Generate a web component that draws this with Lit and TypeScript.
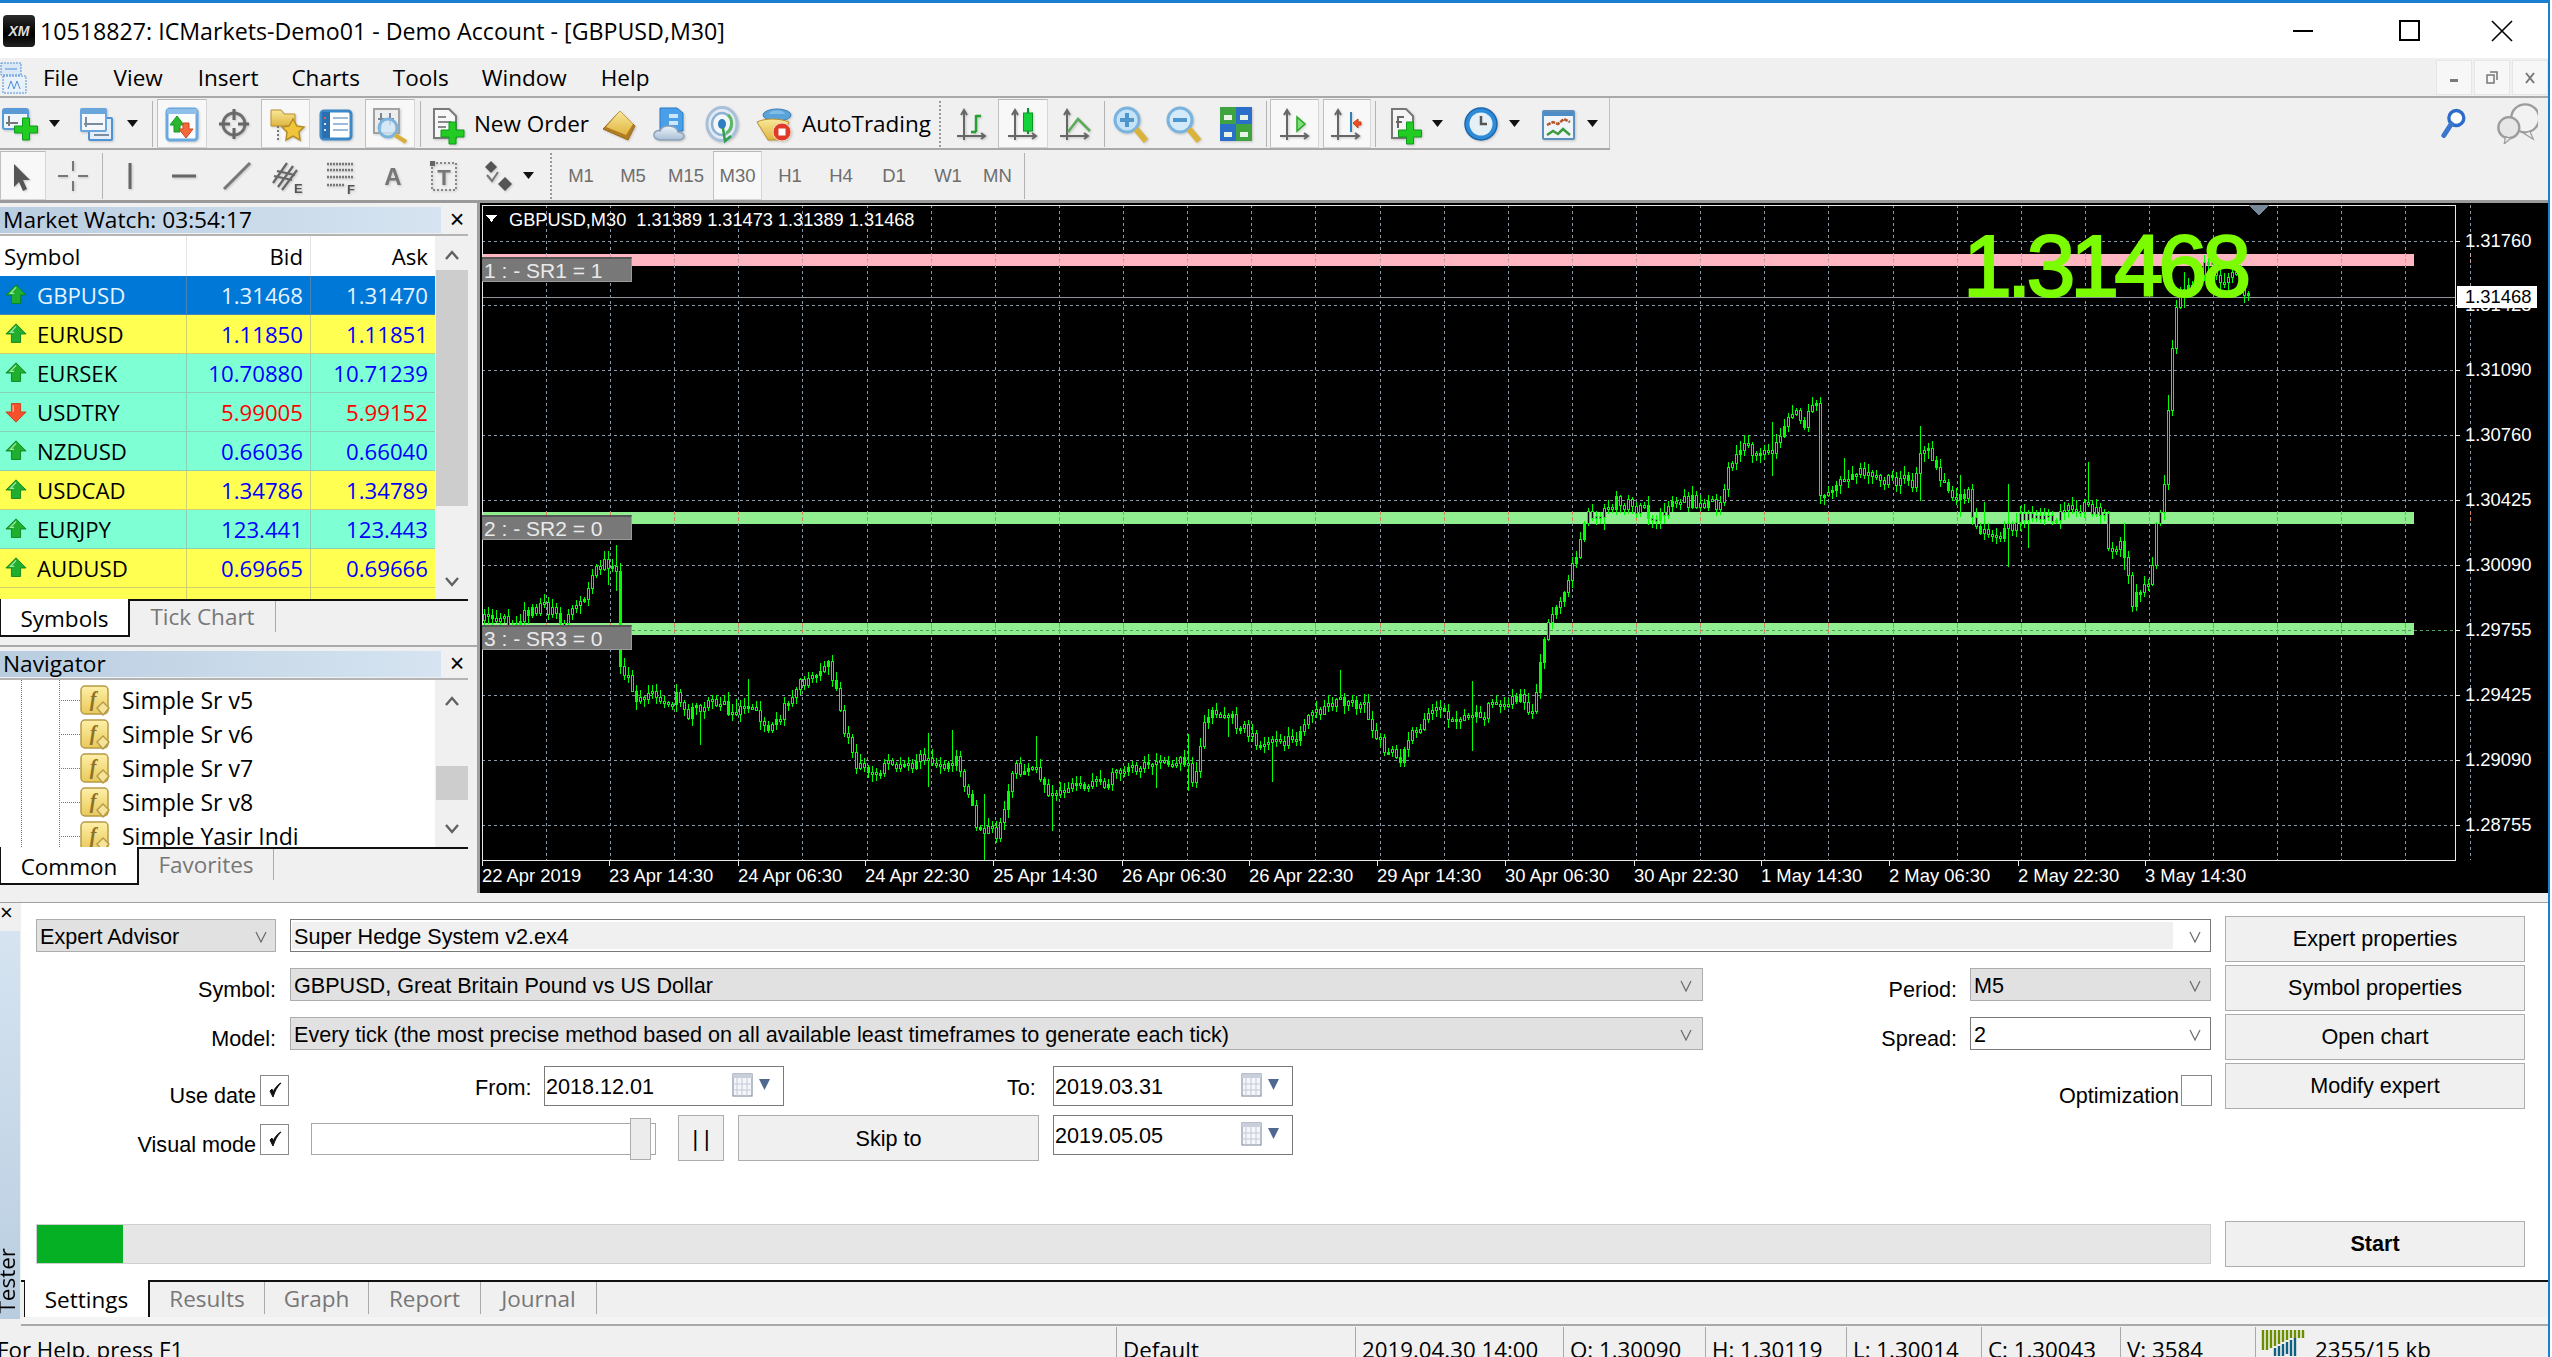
import { LitElement, html, css, svg } from "lit";
import { customElement } from "lit/decorators.js";

const ax = (x: number, y: number, w = 21) => svg`<path d="M${x} 5V${y + 4}M${x - 3} 9l3-5 3 5M${x - 7} ${y}H${x + w}M${x + w - 4} ${y - 3}l4 3-4 3" fill="none" stroke="#666" stroke-width="2"/>`;
const plus = (x = 0, y = 0) => svg`<path transform="translate(${x} ${y})" d="M20 14h7v8h8v7h-8v7h-7v-7h-8v-7h8z" fill="#22cc22" stroke="#0c9a1c"/>`;
const winBg = svg`<defs><linearGradient id="gold" x1="0" y1="0" x2="0" y2="1"><stop offset="0" stop-color="#f8e899"/><stop offset="1" stop-color="#e0b540"/></linearGradient><linearGradient id="cld" x1="0" y1="0" x2="0" y2="1"><stop offset="0" stop-color="#eef3f8"/><stop offset="1" stop-color="#a8bed6"/></linearGradient></defs>`;

const icons: Record<string, any> = {
  newChart: svg`<rect x="3" y="3" width="25" height="20" rx="2" fill="#eef5fc" stroke="#5b9bd5" stroke-width="2"/><rect x="4" y="4" width="23" height="4" fill="#5b9bd5"/><path d="M9 20V10M6 17h12" stroke="#777" stroke-width="2" fill="none"/>${plus(2.5, -2)}`,
  profile: svg`<rect x="10" y="12" width="23" height="22" rx="1" fill="#e3eefa" stroke="#4f93d2" stroke-width="2"/><rect x="2" y="3" width="25" height="22" rx="1" fill="#f4f8fc" stroke="#6aa5dc" stroke-width="2"/><rect x="3" y="4" width="23" height="4" fill="#6aa5dc"/><path d="M7 21V11M5 18h19M15 29h15" stroke="#7d8c9a" stroke-width="2" fill="none"/>`,
  market: svg`<rect x="3" y="3" width="30" height="31" rx="3" fill="#fbfcfd" stroke="#6aa9e0" stroke-width="3"/><rect x="3" y="3" width="30" height="5" fill="#8fbfe8"/><path d="M6 19l7-9 7 9h-4v7h-6v-7z" fill="#2bb62b" stroke="#129a25"/><path d="M15 23h4v-6h6v6h4l-7 9z" fill="#f2693c" stroke="#d9431a"/>`,
  cross: svg`<circle cx="18" cy="18" r="11" fill="none" stroke="#6e6e6e" stroke-width="3"/><path d="M18 3v11M18 22v11M3 18h11M22 18h11" stroke="#666" stroke-width="3"/>`,
  fav: svg`<path d="M3 4h10l3 4h11v12H3z" fill="url(#gold)" stroke="#b98f2a"/><path d="M10 20v14" stroke="#777" stroke-width="2" stroke-dasharray="2 2"/><path d="M25 13l4 7 7 1-5 5 1 8-7-4-7 4 1-8-5-5 7-1z" fill="#f0c53c" stroke="#b58d26" stroke-width="1.5"/>`,
  term: svg`<rect x="3" y="5" width="30" height="28" rx="3" fill="#fff" stroke="#3d88c8" stroke-width="3"/><rect x="4" y="6" width="8" height="26" fill="#2a6fb0"/><path d="M15 12h15M15 18h15M15 24h15" stroke="#9db9dc" stroke-width="2"/><path d="M7 11v2" stroke="#e65b50" stroke-width="2"/><path d="M7 17v2M7 23v2" stroke="#dfe9f3" stroke-width="2"/>`,
  tester: svg`<rect x="2" y="3" width="25" height="24" fill="#ededed" stroke="#a2a2a2" stroke-width="2"/><path d="M9 7v16M18 7v12M6 13h16" stroke="#7a8594" stroke-width="2"/><circle cx="16" cy="22" r="9" fill="#cfe6f8" fill-opacity=".8" stroke="#7db4de" stroke-width="3"/><path d="M23 29l11 7" stroke="#d9ae37" stroke-width="4"/>`,
  order: svg`<path d="M2 3h15l7 7v22H2z" fill="#f7f7f7" stroke="#7a7a7a" stroke-width="2"/><path d="M6 11h8M6 16h13M6 21h8" stroke="#8a8a8a" stroke-width="2"/>${plus(-3, 2)}`,
  gold: svg`<path d="M19 5L2 23l25 11 7-14z" fill="#b27c22" stroke="#9a6a1a"/><path d="M19 5L5 21l20 8 7-11z" fill="url(#gold)"/>`,
  cloudDoc: svg`<path d="M8 2h17l6 5v18H8z" fill="#4aa0e8" stroke="#2a78c4"/><path d="M17 8h9v4h-9zM17 15h9v4h-9z" fill="#cfe6fa"/><path d="M9 34c-5 0-8-3-7-6 1-3 4-4 6-3 1-3 4-5 9-5 5 0 9 3 9 6 4 0 7 3 6 5-1 2-3 3-5 3z" fill="url(#cld)" stroke="#8da2b8" stroke-width="1.5"/>`,
  signal: svg`<ellipse cx="18" cy="18" rx="15" ry="16.500" fill="#e4ebf2" stroke="#a8c0da" stroke-width="3"/><ellipse cx="18" cy="18" rx="10" ry="11" fill="#f2f6f8" stroke="#8eb2d6" stroke-width="2.500"/><path d="M24 9c5 4 5 14-2 18" fill="none" stroke="#5dbb5d" stroke-width="3"/><ellipse cx="18" cy="18" rx="4" ry="5" fill="#2f7fc0"/><path d="M19 22l2 13 6-5" fill="none" stroke="#2f9f4f" stroke-width="2.500"/>`,
  auto: svg`<ellipse cx="21" cy="9" rx="14" ry="6" fill="#5aa3d8" stroke="#3a7fb4"/><path d="M13 8c1-5 15-5 16 0z" fill="#7fbce8"/><path d="M1 16c8-4 22-4 32 0l-8 18H12z" fill="url(#gold)" stroke="#b98f2a"/><circle cx="26" cy="26" r="9" fill="#e03a28" stroke="#f3d9c8" stroke-width="1"/><rect x="22.500" y="22.500" width="7" height="7" fill="#fff"/>`,
  bars: svg`${ax(10, 30)}<path d="M22 9v17M22 10h5M17 26h5" stroke="#22a032" stroke-width="2.400" fill="none"/>`,
  candle: svg`${ax(10, 30)}<path d="M23 2v26" stroke="#0f8f2a" stroke-width="2"/><rect x="18.500" y="7" width="9" height="18" fill="#14d23a" stroke="#0a9628"/>`,
  lineCh: svg`${ax(10, 30)}<path d="M11 26l10-13 12 12" fill="none" stroke="#5aaa5a" stroke-width="2.500"/>`,
  zoomIn: svg`<circle cx="16" cy="14" r="12" fill="#c4e3f8" stroke="#7ab4de" stroke-width="3"/><path d="M16 7v14M9 14h14" stroke="#4f96cc" stroke-width="4"/><path d="M25 23l10 12" stroke="#d9b33c" stroke-width="6"/>`,
  zoomOut: svg`<circle cx="16" cy="14" r="12" fill="#d3eafa" stroke="#7ab4de" stroke-width="3"/><path d="M9 14h14" stroke="#4f96cc" stroke-width="4"/><path d="M25 23l10 12" stroke="#d9b33c" stroke-width="6"/>`,
  tile: svg`<rect x="2" y="1" width="16" height="17" fill="#3fa33f"/><rect x="18" y="1" width="16" height="17" fill="#2b6fc9"/><rect x="2" y="18" width="16" height="17" fill="#2b6fc9"/><rect x="18" y="18" width="16" height="17" fill="#3fa33f"/><path d="M6 9h8v5H6zM22 9h8v5h-8zM6 26h8v5H6zM22 26h8v5h-8z" fill="#e7f3e7"/>`,
  scroll: svg`${ax(10, 30)}<path d="M20 11l8 7-8 7z" fill="#7de07d" stroke="#25a825" stroke-width="1.500"/>`,
  shift: svg`${ax(9, 30)}<path d="M22 6v20" stroke="#2f7fb8" stroke-width="2"/><path d="M24 17l5-4v3h3v3h-3v3z" fill="#ee5020" stroke="#cc3a10"/>`,
  indic: svg`<path d="M2 3h14l7 7v22H2z" fill="#f4f4f4" stroke="#777" stroke-width="2"/><path d="M8 22V11h6M6 16h6" fill="none" stroke="#666" stroke-width="2"/>${plus(-3.500, 2)}`,
  clock: svg`<circle cx="18" cy="18" r="16" fill="#2d8bd8" stroke="#1b66ac" stroke-width="1.500"/><circle cx="18" cy="18" r="11.500" fill="#e4eff6"/><path d="M18 10v8h6" fill="none" stroke="#555" stroke-width="2.500"/>`,
  templ: svg`<rect x="4" y="5" width="31" height="28" rx="1" fill="#eef4f9" stroke="#5b8fbd" stroke-width="2"/><rect x="5" y="6" width="29" height="4" fill="#4d8cc4"/><path d="M8 19l6-3 5 2 6-5 6 3" fill="none" stroke="#b5552b" stroke-width="2.500" stroke-dasharray="4 1"/><path d="M8 29l6-4 5 3 5-5 7 6" fill="none" stroke="#3d9a3d" stroke-width="2.500"/>`,
  search: svg`<circle cx="22" cy="12" r="9" fill="#fff" stroke="#2e6cc9" stroke-width="4"/><path d="M16 19L7 33" stroke="#3a75cf" stroke-width="6" stroke-linecap="round"/>`,
  chat: svg`<circle cx="25" cy="14" r="12" fill="#f2f2f2" stroke="#9c9c9c" stroke-width="2"/><path d="M29 25l3 7-8-5z" fill="#eee" stroke="#9c9c9c"/><circle cx="11" cy="22" r="9" fill="#e6e6e6" stroke="#9c9c9c" stroke-width="2"/><path d="M8 30l-1 6 6-5z" fill="#e6e6e6" stroke="#9c9c9c"/>`,
  cursor: svg`<path d="M9 6v23l5-5 4 9 4-2-4-9h7z" fill="#555"/>`,
  crossT: svg`<path d="M18 3v10M18 23v10M3 18h10M23 18h10" stroke="#777" stroke-width="2"/>`,
  vline: svg`<path d="M18 5v26" stroke="#666" stroke-width="3"/>`,
  hline: svg`<path d="M6 18h24" stroke="#666" stroke-width="3"/>`,
  tline: svg`<path d="M5 31L31 5" stroke="#777" stroke-width="3"/>`,
  chan: svg`<path d="M4 25L18 5M9 29L24 8M13 32L28 12M5 18l18 4M8 13l18 4" stroke="#666" stroke-width="2.200" fill="none"/><text x="25" y="35" font-family="Liberation Sans" font-size="13" font-weight="700" fill="#555">E</text>`,
  fib: svg`<path d="M5 6h27M5 12h27M5 19h27M5 27h18" stroke="#777" stroke-width="2.500" stroke-dasharray="2 1"/><text x="25" y="36" font-family="Liberation Sans" font-size="13" font-weight="700" fill="#555">F</text>`,
  textA: svg`<text x="18" y="27" text-anchor="middle" font-family="Liberation Sans" font-size="24" font-weight="700" fill="#777">A</text>`,
  textT: svg`<rect x="6" y="5" width="24" height="27" fill="none" stroke="#888" stroke-width="2" stroke-dasharray="2 2"/><rect x="4" y="3" width="5" height="5" fill="#666"/><text x="18" y="27" text-anchor="middle" font-family="Liberation Sans" font-size="22" font-weight="700" fill="#777">T</text>`,
  arrows: svg`<path d="M12 3l6 6-6 6-6-6z" fill="#555"/><path d="M8 17l5 6 6-9" fill="none" stroke="#777" stroke-width="2"/><path d="M26 19l7 7-7 7-7-7z" fill="#555"/>`,
};

const ico = (n: string, size = 36) => html`<svg class="ico" width=${size} height=${size} viewBox="0 0 36 36">${winBg}${icons[n]}</svg>`;
const tri = html`<svg class="drop" width="11" height="7" viewBox="0 0 11 7"><path d="M0 0h11L5.500 7z" fill="#111"/></svg>`;
const upArrow = html`<svg class="rowarrow" width="22" height="22" viewBox="0 0 24 26" preserveAspectRatio="none"><path d="M12 1l11 12h-6v10H7V13H1z" fill="#1fae2e" stroke="#0e7f1c"/><path d="M12 4l-6 7h4" fill="none" stroke="#9fe69f" stroke-width="1.500"/></svg>`;
const downArrow = html`<svg class="rowarrow" width="22" height="22" viewBox="0 0 24 26" preserveAspectRatio="none"><path d="M12 25L1 13h6V3h10v10h6z" fill="#f4512c" stroke="#c63a16"/><path d="M9 5v8" fill="none" stroke="#ffb49e" stroke-width="1.500"/></svg>`;
const check = html`<svg class="tick" width="16" height="17" viewBox="0 0 16 17"><path d="M3 9l3 6c2-6 4-10 8-14-3 1-6 5-8 9L5 7z" fill="#111" stroke="#111"/></svg>`;
const calendar = html`<svg class="cal" width="40" height="26" viewBox="0 0 40 26"><rect x="1" y="1" width="19" height="22" fill="#f4f6fa" stroke="#8a94a6" stroke-width="1.200"/><rect x="1" y="1" width="19" height="4" fill="#c8cfdb"/><path d="M5 5v18M10 5v18M15 5v18M1 11h19M1 17h19" stroke="#c3cad6"/><path d="M27 6h11l-5.500 11z" fill="#4f688f"/></svg>`;
const fIcon = html`<svg class="ficon" width="31" height="31" viewBox="0 0 31 31"><rect x="1" y="1" width="27" height="28" rx="4" fill="url(#fg)" stroke="#b69a45" stroke-width="1.500"/><defs><linearGradient id="fg" x1="0" y1="0" x2="0" y2="1"><stop offset="0" stop-color="#fff0a8"/><stop offset="1" stop-color="#e8c95a"/></linearGradient></defs><text x="13" y="21" text-anchor="middle" font-family="Liberation Serif" font-style="italic" font-weight="700" font-size="20" fill="#8d7126">f</text><path d="M23 17l6 6-6 7-6-7z" fill="#f6e39a" stroke="#b69a45" stroke-width="1.400"/></svg>`;
const chevAt = (left: number) => html`<svg class="chev" style="left:${left}px" width="12" height="13" viewBox="0 0 12 13"><path d="M1 2l5 10 5-10" fill="none" stroke="#6a6a6a" stroke-width="1.200"/></svg>`;

type Item = { a: number; b: number; t?: string; i?: string; p?: boolean; k?: string; c?: string };
const tb1: Item[] = [
  { a: 0, b: 36, i: "newChart" }, { a: 43, b: 65, k: "drop" }, { a: 79, b: 115, i: "profile" }, { a: 121, b: 143, k: "drop" }, { a: 151, b: 153, k: "sep" },
  { a: 157, b: 207, i: "market", p: true }, { a: 216, b: 252, i: "cross" }, { a: 261, b: 310, i: "fav", p: true }, { a: 318, b: 354, i: "term" }, { a: 365, b: 415, i: "tester", p: true }, { a: 419, b: 421, k: "sep" },
  { a: 431, b: 469, i: "order" }, { a: 473, b: 590, t: "New Order" }, { a: 601, b: 637, i: "gold" }, { a: 652, b: 688, i: "cloudDoc" }, { a: 704, b: 740, i: "signal" }, { a: 756, b: 792, i: "auto" }, { a: 800, b: 933, t: "AutoTrading" }, { a: 938, b: 941, k: "handle" },
  { a: 954, b: 990, i: "bars" }, { a: 998, b: 1048, i: "candle", p: true }, { a: 1057, b: 1093, i: "lineCh" }, { a: 1103, b: 1105, k: "sep" }, { a: 1111, b: 1147, i: "zoomIn" }, { a: 1164, b: 1200, i: "zoomOut" }, { a: 1218, b: 1254, i: "tile" }, { a: 1265, b: 1267, k: "sep" },
  { a: 1270, b: 1319, i: "scroll", p: true }, { a: 1323, b: 1371, i: "shift", p: true }, { a: 1374, b: 1376, k: "sep" }, { a: 1390, b: 1426, i: "indic" }, { a: 1426, b: 1448, k: "drop" }, { a: 1463, b: 1499, i: "clock" }, { a: 1503, b: 1525, k: "drop" }, { a: 1539, b: 1575, i: "templ" }, { a: 1581, b: 1603, k: "drop" },
];
const tb2: Item[] = [
  { a: 0, b: 46, i: "cursor", p: true }, { a: 55, b: 91, i: "crossT" }, { a: 101, b: 103, k: "sep" }, { a: 112, b: 148, i: "vline" }, { a: 166, b: 202, i: "hline" }, { a: 219, b: 255, i: "tline" }, { a: 269, b: 305, i: "chan" }, { a: 322, b: 358, i: "fib" }, { a: 375, b: 411, i: "textA" }, { a: 426, b: 462, i: "textT" }, { a: 479, b: 515, i: "arrows" }, { a: 517, b: 539, k: "drop" }, { a: 549, b: 552, k: "handle" },
  { a: 556, b: 606, c: "M1" }, { a: 608, b: 658, c: "M5" }, { a: 661, b: 711, c: "M15" }, { a: 713, b: 762, c: "M30", p: true }, { a: 766, b: 814, c: "H1" }, { a: 816, b: 866, c: "H4" }, { a: 869, b: 919, c: "D1" }, { a: 923, b: 973, c: "W1" }, { a: 973, b: 1022, c: "MN" }, { a: 1024, b: 1025, k: "sep" },
];

const watch = [
  ["GBPUSD", "1.31468", "1.31470", "cur", "up", ""],
  ["EURUSD", "1.11850", "1.11851", "y", "up", ""],
  ["EURSEK", "10.70880", "10.71239", "a", "up", ""],
  ["USDTRY", "5.99005", "5.99152", "a", "down", "red"],
  ["NZDUSD", "0.66036", "0.66040", "a", "up", ""],
  ["USDCAD", "1.34786", "1.34789", "y", "up", ""],
  ["EURJPY", "123.441", "123.443", "a", "up", ""],
  ["AUDUSD", "0.69665", "0.69666", "y", "up", ""],
];

const way: number[][] = [[482,620],[518,622],[528,611],[544,606],[563,622],[576,602],[588,593],[598,562],[611,568],[617,570],[619,664],[627,678],[636,704],[649,691],[665,707],[678,695],[687,716],[716,700],[732,711],[754,707],[764,727],[780,718],[792,691],[808,675],[828,664],[837,691],[843,731],[856,762],[875,776],[888,765],[907,771],[920,754],[936,771],[955,758],[968,789],[977,825],[997,836],[1006,803],[1012,767],[1035,771],[1048,791],[1070,789],[1089,780],[1102,789],[1115,771],[1143,765],[1162,765],[1188,758],[1193,789],[1204,722],[1210,713],[1233,720],[1258,740],[1296,740],[1309,718],[1341,702],[1363,704],[1373,736],[1398,760],[1414,731],[1437,709],[1456,718],[1482,718],[1488,709],[1504,698],[1520,700],[1530,713],[1536,691],[1542,646],[1549,624],[1558,602],[1571,566],[1581,535],[1587,512],[1603,512],[1616,501],[1641,510],[1660,515],[1670,501],[1705,501],[1721,508],[1727,468],[1743,441],[1756,454],[1775,450],[1791,408],[1804,421],[1818,401],[1820,495],[1833,490],[1852,475],[1871,470],[1884,481],[1903,479],[1912,490],[1922,445],[1928,454],[1941,477],[1954,495],[1970,490],[1973,530],[1998,539],[2018,519],[2053,519],[2072,504],[2104,512],[2107,548],[2120,541],[2129,579],[2132,600],[2151,577],[2155,526],[2163,504],[2167,428],[2171,358],[2177,298],[2183,289],[2196,280],[2206,258],[2222,289],[2231,271],[2246,296],[2250,296]];
const yAt = (x: number) => {
  for (let i = 1; i < way.length; i++) {
    if (x <= way[i][0]) {
      const [x0, y0] = way[i - 1], [x1, y1] = way[i];
      return y0 + ((y1 - y0) * (x - x0)) / (x1 - x0);
    }
  }
  return way[way.length - 1][1];
};
let seed = 20190503;
const rnd = () => ((seed = (seed * 16807) % 2147483647) - 1) / 2147483646;

const OX = 480, OY = 203;
let hollow = "", solid = "";
{
  let prev = yAt(484) - OY;
  for (let x = 484; x <= 2249; x += 4) {
    const px = x - OX;
    const steep = Math.abs(yAt(x + 4) - yAt(x - 4));
    const close = yAt(x) - OY + (rnd() - 0.5) * (steep > 30 ? 2 : 13);
    const top = Math.round(Math.min(prev, close));
    const bot = Math.max(top + 2, Math.round(Math.max(prev, close)));
    const big = rnd() < 0.09 ? 10 + rnd() * 24 : 0;
    const hi = Math.round(top - 1 - rnd() * 8 - (rnd() < 0.5 ? big : 0));
    const lo = Math.round(bot + 1 + rnd() * 8 + (rnd() < 0.5 ? big : 0));
    const d = `M${px + 0.5} ${hi}V${top}M${px + 0.5} ${bot}V${lo}M${px - 0.5} ${top + 0.5}h2V${bot + 0.5}h-2z`;
    if (rnd() < 0.8) hollow += d; else solid += d;
    prev = close;
  }
}
const vgrid: number[] = [];
for (let i = 0; i < 31; i++) vgrid.push(Math.round(66 + i * 64.12));
const hgrid = [38, 102, 167, 232, 297, 362, 427, 492, 557, 622];
const prices = [
  [38, "1.31760"], [102, "1.31425"], [167, "1.31090"], [232, "1.30760"], [297, "1.30425"], [362, "1.30090"], [427, "1.29755"], [492, "1.29425"], [557, "1.29090"], [622, "1.28755"],
] as [number, string][];
const dates = [[482, "22 Apr 2019"], [609, "23 Apr 14:30"], [738, "24 Apr 06:30"], [865, "24 Apr 22:30"], [993, "25 Apr 14:30"], [1122, "26 Apr 06:30"], [1249, "26 Apr 22:30"], [1377, "29 Apr 14:30"], [1505, "30 Apr 06:30"], [1634, "30 Apr 22:30"], [1761, "1 May 14:30"], [1889, "2 May 06:30"], [2018, "2 May 22:30"], [2145, "3 May 14:30"]] as [number, string][];
const srLabels = [[54, "1 : - SR1 = 1"], [312, "2 : - SR2 = 0"], [422, "3 : - SR3 = 0"]] as [number, string][];

const statusCells = [[-3, 1116, "For Help, press F1"], [1116, 1355, "Default"], [1355, 1563, "2019.04.30 14:00"], [1563, 1705, "O: 1.30090"], [1705, 1846, "H: 1.30119"], [1846, 1981, "L: 1.30014"], [1981, 2120, "C: 1.30043"], [2120, 2255, "V: 3584"]] as [number, number, string][];

@customElement("app-root")
export class AppRoot extends LitElement {
  static styles = css`
    :host { display: block; width: 2552px; height: 1357px; overflow: hidden; background: #fff; font-family: "Open Sans", "Liberation Sans", sans-serif; color: #000; }
    * { box-sizing: border-box; }
    .window { width: 2550px; height: 1357px; border-top: 3px solid #1a7fd1; border-right: 2px solid #1a7fd1; display: flex; flex-direction: column; overflow: hidden; background: #f0f0f0; }
    .titlebar { height: 55px; background: #fff; display: flex; align-items: center; flex: none; }
    .logo { width: 32px; height: 32px; margin-left: 3px; border-radius: 4px; background: linear-gradient(#2b2b2b, #000 60%, #222); color: #ddd; font: italic 700 14px "Liberation Sans", sans-serif; display: flex; align-items: center; justify-content: center; }
    .ttl { margin-left: 5px; font-size: 23.2px; white-space: nowrap; flex: 1; }
    .ctl { width: 92px; height: 40px; display: flex; align-items: center; justify-content: center; }
    .ctl1 { margin-right: 30px; width: 60px; }
    .menubar { height: 40px; flex: none; display: flex; align-items: center; position: relative; border-bottom: 2px solid #a9a9a9; font-size: 22.5px; padding-top: 1px; }
    .mdi-ico { flex: none; margin-right: 0; }
    .menubar span { white-space: nowrap; }
    .mdi { position: absolute; right: 0; top: 2px; height: 35px; display: flex; gap: 2px; }
    .mdi div { width: 36px; background: #f7f7f7; border: 1px solid #e6e6e6; display: flex; align-items: center; justify-content: center; color: #666; }
    .tb { height: 52px; flex: none; display: flex; position: relative; align-items: stretch; font-size: 22.5px; }
    .tb1 { padding-top: 1px; }
    .tb2 { height: 53px; padding-top: 1px; }
    .tb-rule { position: absolute; left: 0; bottom: 0; height: 2px; background: #a9a9a9; }
    .tb-rule.r1 { width: 1610px; }
    .tb-rule.r2 { width: 100%; height: 3px; background: #9a9a9a; }
    .tb-end { position: absolute; left: 1609px; top: 0; height: 50px; width: 1px; background: #c0c0c0; }
    .slot { flex: none; display: flex; align-items: center; justify-content: center; height: 49px; white-space: nowrap; }
    .slot .ico { filter: blur(0.45px) drop-shadow(1px 1px 1px rgba(0,0,0,.18)); overflow: visible; }
    .slot.pressed { background: #f8f8f8; border: 1px solid #d6d6d6; border-top-color: #b8b8b8; border-left-color: #c0c0c0; }
    .slot.sep i { display: block; width: 1px; height: 46px; background: #b4b4b4; }
    .slot.handle i { display: block; width: 2px; height: 46px; border-left: 2px dotted #9a9a9a; }
    .slot.per { color: #6e6e6e; font: 18.5px "Liberation Sans", sans-serif; }
    .right-tools { position: absolute; right: 0; top: 4px; display: flex; gap: 28px; align-items: center; padding-right: 10px; }
    .right-tools .ico { filter: blur(0.45px); }
    .main { height: 690px; flex: none; display: flex; }
    .left { width: 480px; flex: none; border-right: 3px solid #a0a0a0; display: flex; flex-direction: column; }
    .pane-title { height: 26px; width: 468px; margin-top: 4px; display: flex; flex: none; }
    .pane-title b { width: 441px; font-weight: 400; font-size: 22.7px; line-height: 26px; padding-left: 3px; background: linear-gradient(90deg, #b9cde0, #d6e4f1); white-space: nowrap; overflow: hidden; }
    .pane-title em { flex: 1; font-style: normal; font-size: 25px; line-height: 24px; text-align: center; font-family: "Liberation Sans", sans-serif; padding-left: 5px; }
    .pane-rule { height: 2px; width: 468px; margin-top: 1px; background: #b4b4b4; flex: none; }
    .mw-body { height: 363px; width: 468px; display: flex; flex: none; }
    .mw-table { width: 435px; background: #fff; overflow: hidden; }
    .mw-row { display: grid; grid-template-columns: 186px 124px 125px; height: 39px; font-size: 22.2px; align-items: stretch; }
    .mw-row > div { display: flex; align-items: center; border-left: 1px solid rgba(150,150,150,.45); border-bottom: 1px solid rgba(150,150,150,.45); white-space: nowrap; }
    .mw-row > div:first-child { border-left: 0; }
    .mw-row .n { justify-content: flex-end; padding-right: 7px; color: #0000ff; }
    .mw-row.red .n { color: #ff0000; }
    .mw-head { height: 40px; background: #fff; }
    .mw-head > div { border-bottom: 0 !important; border-left-color: #e4e4e4 !important; }
    .mw-head .n { color: #000; padding-right: 7px; }
    .mw-head .sy { padding-left: 4px; }
    .mw-row.y > div { background: #ffff52; }
    .mw-row.a > div { background: #7fffd4; }
    .mw-row.cur > div { background: #0078d7; color: #e6f4ff; }
    .mw-row.cur .n { color: #e6f4ff; }
    .sym { padding-left: 5px; }
    .rowarrow { margin-right: 10px; flex: none; }
    .vbar { width: 33px; background: #f0f0f0; position: relative; flex: none; }
    .vbar .schev { position: absolute; left: 10px; }
    .vbar .thumb { position: absolute; left: 1px; right: 0; background: #cdcdcd; }
    .tabs { display: flex; flex: none; border-top: 2px solid #111; width: 468px; font-size: 22.5px; height: 37px; color: #777; }
    .tabs .act { background: #fff; color: #000; border-right: 2px solid #111; border-bottom: 2px solid #111; border-left: 1px solid #111; display: flex; align-items: center; justify-content: center; margin-top: -2px; height: 38px; padding-top: 2px; }
    .tabs .ina { display: flex; align-items: center; justify-content: center; }
    .tabs .ina.w146 { width: 146px; border-right: 1px solid #aaa; height: 31px; }
    .tabs .ina.w135 { width: 135px; border-right: 1px solid #aaa; height: 31px; }
    .tabs .act.w130 { width: 130px; }
    .tabs .act.w139 { width: 139px; }
    .gap9 { height: 9px; flex: none; }
    .pane-sep { height: 2px; background: #a9a9a9; flex: none; }
    .nav-list { height: 167px; width: 468px; flex: none; display: flex; }
    .nav-items { width: 435px; background: #fff; overflow: hidden; padding-top: 3px; position: relative; }
    .nav-items::before, .nav-items::after { content: ""; position: absolute; top: 0; bottom: 0; border-left: 1px dotted #777; }
    .nav-items::before { left: 21px; }
    .nav-items::after { left: 59px; }
    .nav-row { height: 34px; display: flex; align-items: center; font-size: 23px; line-height: 30px; white-space: nowrap; }
    .nav-row i { width: 21px; margin-left: 59px; border-top: 1px dotted #777; flex: none; }
    .ficon { flex: none; margin-right: 11px; }
    .chart { flex: 1; background: #000; position: relative; overflow: hidden; }
    .chart svg.plot { position: absolute; left: 0; top: 0; }
    .ct { position: absolute; color: #fff; font: 18.4px "Liberation Sans", sans-serif; white-space: pre; line-height: 22px; }
    .ct.head { left: 29px; top: 6px; font-size: 18.2px; }
    .bigp { position: absolute; left: 1483px; top: 13px; color: #7cfc00; font: 88px/100px "Liberation Sans", sans-serif; letter-spacing: -5px; -webkit-text-stroke: 2px #7cfc00; white-space: nowrap; }
    .sr { position: absolute; left: 2px; width: 150px; height: 25px; background: #787878; border-top: 2px solid #555; border-bottom: 1px solid #9a9a9a; border-right: 1px solid #9a9a9a; color: #eaeaea; font: 21px/23px "Liberation Sans", sans-serif; white-space: pre; padding-left: 2px; }
    .curp { position: absolute; left: 1977px; top: 83px; width: 80px; height: 22px; background: #fff; color: #000; font: 18.4px/22px "Liberation Sans", sans-serif; padding-left: 8px; }
    .tester { height: 434px; flex: none; display: flex; flex-direction: column; background: #f0f0f0; }
    .tester-top { height: 10px; flex: none; border-bottom: 1px solid #a0a0a0; }
    .tester-main { flex: 1; display: flex; min-height: 0; }
    .strip { width: 21px; flex: none; display: flex; flex-direction: column; align-items: stretch; font-family: "Liberation Sans", sans-serif; }
    .strip .x { height: 28px; font-size: 22px; line-height: 20px; overflow: hidden; }
    .strip .grad { height: 388px; width: 20px; background: linear-gradient(#d6e4f1, #b9cde0); position: relative; overflow: hidden; }
    .strip .vt { position: absolute; bottom: 5px; left: -4px; writing-mode: vertical-rl; transform: rotate(180deg); font-size: 22.5px; line-height: 22px; white-space: nowrap; font-family: "Open Sans", sans-serif; }
    .t-right { flex: 1; display: flex; flex-direction: column; min-width: 0; font: 21.6px "Liberation Sans", sans-serif; }
    .t-white { height: 377px; flex: none; background: #fff; display: flex; padding: 16px 0 0 15px; gap: 14px; }
    .form { width: 2175px; flex: none; display: flex; flex-direction: column; }
    .frow { display: flex; flex: none; }
    .frow.h33 { height: 33px; margin-bottom: 16px; }
    .dd { display: flex; align-items: center; position: relative; padding: 2px 0 0 3px; white-space: nowrap; background: #e1e1e1; border: 1px solid #adadad; flex: none; height: 33px; }
    .dd .chev { position: absolute; top: 10px; }
    .dd.w { background: #fff; border-color: #7a7a7a; }
    .dd.ea { flex: 1; background: #fff; border-color: #7a7a7a; padding: 2px 37px 2px 1px; margin-left: 14px; }
    .dd.ea span { background: #f0f0f0; flex: 1; height: 100%; line-height: 29px; padding-left: 2px; }
    .lab { white-space: nowrap; text-align: right; padding-top: 9px; flex: none; }
    .w240 { width: 240px; }
    .ml14 { margin-left: 14px; }
    .w1413 { width: 1413px; }
    .w241 { width: 241px; }
    .lab.l2 { width: 254px; margin-right: 13px; }
    .rowd { height: 40px; margin-bottom: 9px; }
    .rowe { height: 46px; margin-bottom: 63px; }
    .lab.big { width: 220px; margin-right: 4px; }
    .lab.ud { padding-top: 17px; }
    .lab.vm { padding-top: 17px; }
    .cb { width: 29px; height: 31px; margin-top: 9px; border: 1px solid #8a8a8a; background: #fff; flex: none; display: flex; align-items: center; justify-content: center; }
    .date { width: 240px; height: 40px; border: 1px solid #7a7a7a; background: #fff; display: flex; align-items: center; padding: 1px 11px 0 1px; flex: none; justify-content: space-between; }
    .date .cal { margin-top: -1px; }
    .from { margin-left: 186px; padding-top: 9px; width: 55px; margin-right: 14px; text-align: left; }
    .to { margin-left: 223px; width: 31px; margin-right: 15px; padding-top: 9px; text-align: left; }
    .opt { margin-left: 766px; width: 118px; margin-right: 4px; padding-top: 17px; }
    .cb.optb { width: 31px; }
    .slider { width: 345px; height: 32px; margin: 8px 0 0 22px; border: 1px solid #a8a8a8; background: #fff; position: relative; flex: none; }
    .thumb2 { position: absolute; left: 318px; top: -6px; width: 21px; height: 42px; background: #ececec; border: 1px solid #adadad; }
    .btn { background: #f0f0f0; border: 1px solid #adadad; display: flex; align-items: center; justify-content: center; flex: none; }
    .pause { width: 46px; height: 46px; margin-left: 22px; padding-top: 2px; }
    .skip { width: 301px; height: 46px; margin-left: 14px; padding-top: 2px; }
    .date2 { margin-left: 14px; }
    .progress { height: 40px; background: #e6e6e6; border: 1px solid #cfcfcf; flex: none; }
    .progress div { width: 86px; height: 100%; background: #06b025; }
    .btns { width: 300px; flex: none; display: flex; flex-direction: column; gap: 3px; margin-top: -3px; }
    .btns .btn { height: 46px; }
    .btns .start { margin-top: 109px; font-weight: 700; }
    .ttabs { display: flex; height: 37px; border-top: 2px solid #111; flex: none; color: #777; font: 22.5px "Open Sans", sans-serif; }
    .ttabs .act { margin: -2px 0 0 3px; width: 126px; height: 39px; background: #fff; color: #000; border: 1px solid #111; border-right-width: 2px; border-bottom-width: 2px; border-top: 0; padding-top: 2px; display: flex; align-items: center; justify-content: center; }
    .ttabs .ina { display: flex; align-items: center; justify-content: center; height: 32px; border-right: 1px solid #aaa; }
    .t-foot { height: 9px; flex: none; border-bottom: 2px solid #a9a9a9; background: #f4f4f4; }
    .status { flex: 1; display: flex; overflow: hidden; font: 22.3px "Open Sans", sans-serif; }
    .status .c { flex: none; border-left: 1px solid #a9a9a9; padding: 7px 0 0 6px; white-space: nowrap; }
    .status .c:first-child { border-left: 0; padding-left: 0; margin-left: -3px; }
    .status .last { display: flex; padding: 0; flex: 1; }
    .status .last span { padding-top: 7px; }
    .stat-ico { flex: none; margin: 3px 8px 0 5px; }
  `;

  private slots(items: Item[]) {
    let prev = 0;
    return items.map((it) => {
      const ml = it.a - prev;
      prev = it.b;
      const st = `margin-left:${ml}px;width:${it.b - it.a}px`;
      const cls = `slot ${it.p ? "pressed" : ""} ${it.k || ""} ${it.c ? "per" : ""}`;
      return html`<div class=${cls} style=${st}>${it.i ? ico(it.i) : it.t ? it.t : it.c ? it.c : it.k === "drop" ? tri : html`<i></i>`}</div>`;
    });
  }

  private scroll(h: number, chevTop: number, chevBot: number, tTop: number, tH: number) {
    return html`<div class="vbar" style="height:${h}px">
      <svg class="schev" style="top:${chevTop}px" width="14" height="10" viewBox="0 0 14 10"><path d="M1 9l6-7 6 7" fill="none" stroke="#606060" stroke-width="2.400"/></svg>
      <div class="thumb" style="top:${tTop}px;height:${tH}px"></div>
      <svg class="schev" style="top:${chevBot}px" width="14" height="10" viewBox="0 0 14 10"><path d="M1 1l6 7 6-7" fill="none" stroke="#606060" stroke-width="2.400"/></svg>
    </div>`;
  }

  private chartSvg() {
    const W = 2068, H = 690;
    return html`<svg class="plot" width=${W} height=${H} viewBox="0 0 ${W} ${H}" shape-rendering="crispEdges">
      <rect x="2" y="51" width="1932" height="12" fill="#ffb6c1"/>
      <rect x="2" y="309" width="1932" height="12" fill="#90ee90"/>
      <rect x="2" y="420" width="1932" height="12" fill="#90ee90"/>
      ${hgrid.map((y) => svg`<path d="M2 ${y + 0.5}H1975" stroke=${y === 427 ? "#4f9f5f" : "#8b98a6"} stroke-dasharray="3 3"/>`)}
      ${vgrid.map((x) => svg`<path d="M${x + 0.5} 2V657" stroke="#8b98a6" stroke-dasharray="3 3"/>
        <path d="M${x + 0.5} 309V321M${x + 0.5} 420V432" stroke="#e0805a" stroke-dasharray="3 3"/>
        <path d="M${x + 0.5} 51V63" stroke="#d8a0a8" stroke-dasharray="3 3"/>`)}
      <path d="M2 94.500H1975" stroke="#8e949a"/>
      <path d=${hollow} fill="#000" stroke="#00ff00"/>
      <path d=${solid} fill="#00ff00" stroke="#00ff00"/>
      <rect x="2.500" y="2.500" width="1973" height="655" fill="none" stroke="#e8e8e8"/>
      <path d="M1769 2h20l-10 11z" fill="#778899"/>
      ${dates.map(([x]) => svg`<path d="M${x - OX + 0.5} 657v6" stroke="#e8e8e8"/>`)}
      ${prices.map(([y]) => svg`<path d="M1975 ${y + 0.5}h5" stroke="#e8e8e8"/>`)}
      <path d="M6 12h11l-5.500 7z" fill="#fff"/>
    </svg>`;
  }

  render() {
    const gap = (n: number) => `margin-left:${n}px`;
    return html`<div class="window">
      <div class="titlebar">
        <div class="logo">XM</div>
        <div class="ttl">10518827: ICMarkets-Demo01 - Demo Account - [GBPUSD,M30]</div>
        <div class="ctl ctl1"><svg width="22" height="4"><rect width="20" height="2" y="1" fill="#000"/></svg></div>
        <div class="ctl"><svg width="22" height="22"><rect x="1" y="1" width="19" height="19" fill="none" stroke="#000" stroke-width="2"/></svg></div>
        <div class="ctl"><svg width="24" height="22"><path d="M2 1l20 20M22 1L2 21" stroke="#000" stroke-width="1.600"/></svg></div>
      </div>
      <div class="menubar">
        <svg class="mdi-ico" width="28" height="34" viewBox="0 0 28 34"><rect x="1" y="2" width="20" height="12" fill="#dbe8f6" stroke="#4d8fd6" stroke-dasharray="2 1"/><rect x="3" y="15" width="23" height="17" fill="#e9f1fb" stroke="#4d8fd6" stroke-dasharray="2 1"/><path d="M8 28l3-8 3 8 3-8 3 8" fill="none" stroke="#4d8fd6"/><path d="M5 8h12" stroke="#4d8fd6"/></svg>
        <span style=${gap(15)}>File</span><span style=${gap(35)}>View</span><span style=${gap(35)}>Insert</span><span style=${gap(33)}>Charts</span><span style=${gap(33)}>Tools</span><span style=${gap(33)}>Window</span><span style=${gap(34)}>Help</span>
        <div class="mdi">
          <div><svg width="10" height="12"><rect x="1" y="7" width="8" height="3" fill="#7a7a7a"/></svg></div>
          <div><svg width="12" height="14"><path d="M4 1h7v8M1 4h7v8H1z" fill="none" stroke="#777" stroke-width="1.500"/></svg></div>
          <div><svg width="12" height="14"><path d="M2 2l8 10M10 2L2 12" stroke="#777" stroke-width="2"/></svg></div>
        </div>
      </div>
      <div class="tb tb1">${this.slots(tb1)}
        <div class="tb-end"></div>
        <div class="tb-rule r1"></div>
        <div class="right-tools">${ico("search", 30)}${ico("chat", 42)}</div>
      </div>
      <div class="tb tb2">${this.slots(tb2)}<div class="tb-rule r2"></div></div>
      <div class="main">
        <div class="left">
          <div class="pane-title"><b>Market Watch: 03:54:17</b><em>×</em></div>
          <div class="pane-rule"></div>
          <div class="mw-body">
            <div class="mw-table">
              <div class="mw-row mw-head"><div class="sy">Symbol</div><div class="n">Bid</div><div class="n">Ask</div></div>
              ${watch.map((r) => html`<div class="mw-row ${r[3]} ${r[5]}"><div class="sym">${r[4] === "up" ? upArrow : downArrow}${r[0]}</div><div class="n">${r[1]}</div><div class="n">${r[2]}</div></div>`)}
              <div class="mw-row y"><div></div><div></div><div></div></div>
            </div>
            ${this.scroll(363, 14, 341, 34, 236)}
          </div>
          <div class="tabs"><div class="act w130">Symbols</div><div class="ina w146">Tick Chart</div></div>
          <div class="gap9"></div>
          <div class="pane-sep"></div>
          <div class="pane-title"><b>Navigator</b><em>×</em></div>
          <div class="pane-rule"></div>
          <div class="nav-list">
            <div class="nav-items">
              ${["Simple Sr v5", "Simple Sr v6", "Simple Sr v7", "Simple Sr v8", "Simple Yasir Indi"].map((n) => html`<div class="nav-row"><i></i>${fIcon}<span>${n}</span></div>`)}
            </div>
            ${this.scroll(167, 16, 144, 86, 34)}
          </div>
          <div class="tabs"><div class="act w139">Common</div><div class="ina w135">Favorites</div></div>
        </div>
        <div class="chart">
          ${this.chartSvg()}
          <div class="ct head">GBPUSD,M30  1.31389 1.31473 1.31389 1.31468</div>
          <div class="bigp">1.31468</div>
          ${srLabels.map(([y, t]) => html`<div class="sr" style="top:${y}px">${t}</div>`)}
          ${prices.map(([y, t]) => html`<div class="ct" style="left:1985px;top:${y - 11}px">${t}</div>`)}
          <div class="curp">1.31468</div>
          ${dates.map(([x, t]) => html`<div class="ct" style="left:${x - OX}px;top:662px">${t}</div>`)}
        </div>
      </div>
      <div class="tester">
        <div class="tester-top"></div>
        <div class="tester-main">
          <div class="strip"><div class="x">×</div><div class="grad"><div class="vt">Tester</div></div></div>
          <div class="t-right">
            <div class="t-white">
              <div class="form">
                <div class="frow h33">
                  <div class="dd w240">Expert Advisor${chevAt(218)}</div>
                  <div class="dd ea"><span>Super Hedge System v2.ex4</span>${chevAt(1898)}</div>
                </div>
                <div class="frow h33">
                  <div class="lab w240">Symbol:</div>
                  <div class="dd ml14 w1413">GBPUSD, Great Britain Pound vs US Dollar${chevAt(1389)}</div>
                  <div class="lab l2">Period:</div>
                  <div class="dd w241">M5${chevAt(218)}</div>
                </div>
                <div class="frow h33">
                  <div class="lab w240">Model:</div>
                  <div class="dd ml14 w1413">Every tick (the most precise method based on all available least timeframes to generate each tick)${chevAt(1389)}</div>
                  <div class="lab l2">Spread:</div>
                  <div class="dd w241 w">2${chevAt(218)}</div>
                </div>
                <div class="frow rowd">
                  <div class="lab big ud">Use date</div><div class="cb">${check}</div>
                  <div class="lab from">From:</div>
                  <div class="date"><span>2018.12.01</span>${calendar}</div>
                  <div class="lab to">To:</div>
                  <div class="date"><span>2019.03.31</span>${calendar}</div>
                  <div class="lab opt">Optimization</div><div class="cb optb"></div>
                </div>
                <div class="frow rowe">
                  <div class="lab big vm">Visual mode</div><div class="cb">${check}</div>
                  <div class="slider"><div class="thumb2"></div></div>
                  <div class="btn pause">| |</div>
                  <div class="btn skip">Skip to</div>
                  <div class="date date2"><span>2019.05.05</span>${calendar}</div>
                </div>
                <div class="progress"><div></div></div>
              </div>
              <div class="btns">
                <div class="btn">Expert properties</div>
                <div class="btn">Symbol properties</div>
                <div class="btn">Open chart</div>
                <div class="btn">Modify expert</div>
                <div class="btn start">Start</div>
              </div>
            </div>
            <div class="ttabs">
              <div class="act">Settings</div>
              ${[["Results", 115], ["Graph", 104], ["Report", 112], ["Journal", 116]].map(([t, w]) => html`<div class="ina" style="width:${w}px">${t}</div>`)}
            </div>
            <div class="t-foot"></div>
          </div>
        </div>
      </div>
      <div class="status">
        ${statusCells.map(([a, b, t]) => html`<div class="c" style="width:${b - a}px">${t}</div>`)}
        <div class="c last">
          <svg class="stat-ico" width="46" height="26" viewBox="0 0 46 26"><path d="M2 0v20M6 0v20M10 0v18M14 0v16M18 0v14M22 0v12M26 0v10M30 0v8M34 0v8M38 0v8M42 0v8" stroke="#6a8e00" stroke-width="2.400"/><path d="M14 18v8M18 16v10M22 14v12M26 12v12M30 10v16M34 8v18" stroke="#0f5f7f" stroke-width="2.400"/></svg>
          <span>2355/15 kb</span>
        </div>
      </div>
    </div>`;
  }
}
